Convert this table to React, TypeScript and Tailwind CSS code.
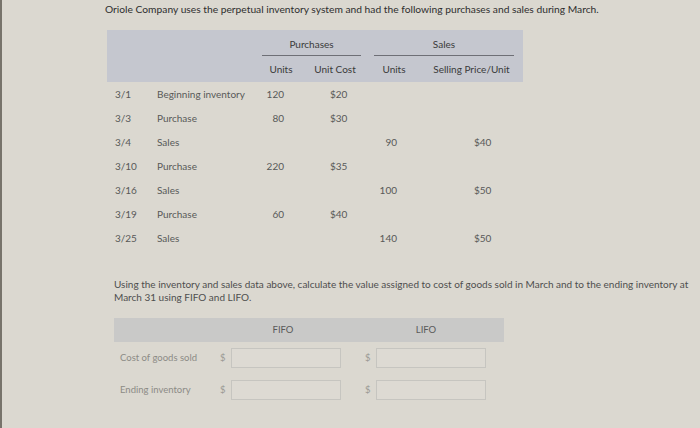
import React from 'react';

const rows = [
  { date: '3/1', desc: 'Beginning inventory', pu: '120', pc: '$20', su: '', sp: '' },
  { date: '3/3', desc: 'Purchase', pu: '80', pc: '$30', su: '', sp: '' },
  { date: '3/4', desc: 'Sales', pu: '', pc: '', su: '90', sp: '$40' },
  { date: '3/10', desc: 'Purchase', pu: '220', pc: '$35', su: '', sp: '' },
  { date: '3/16', desc: 'Sales', pu: '', pc: '', su: '100', sp: '$50' },
  { date: '3/19', desc: 'Purchase', pu: '60', pc: '$40', su: '', sp: '' },
  { date: '3/25', desc: 'Sales', pu: '', pc: '', su: '140', sp: '$50' },
];

const cols = 'grid grid-cols-[50px_105px_38px_70px_48px_105px]';
const answerCols = 'grid grid-cols-[106px_11px_110px_35px_110px_18px]';

export default function App() {
  return (
    <div className="w-[700px] h-[428px] bg-[#dbd8d0] border-l-2 border-[#77736b] overflow-hidden font-['Lato','Liberation_Sans',sans-serif]">
      <div className="pl-[103px] pt-[2px]">
        {/* Question text */}
        <p className="text-[10.25px] leading-[14px] text-[#2e2e2e] whitespace-nowrap">
          Oriole Company uses the perpetual inventory system and had the following purchases and sales during March.
        </p>

        {/* Inventory table */}
        <div className="mt-[14px] ml-[2px] w-[416px]">
          <div className="bg-[#c5c7cf] h-[52px] pt-[7px] text-[10px] text-[#3a3a3a]">
            <div className={cols}>
              <div className="col-span-2" />
              <div className="col-span-2 pr-[9px]">
                <div className="text-center leading-[14px]">Purchases</div>
                <div className="mt-[4px] h-px bg-[#6e6f76]" />
              </div>
              <div className="col-span-2 pl-[4px] pr-[9px]">
                <div className="text-center leading-[14px]">Sales</div>
                <div className="mt-[4px] h-px bg-[#6e6f76]" />
              </div>
            </div>
            <div className={`${cols} mt-[6px] leading-[14px]`}>
              <div className="col-span-2" />
              <div className="text-center">Units</div>
              <div className="text-center">Unit Cost</div>
              <div className="text-center">Units</div>
              <div className="text-center pl-[2px]">Selling Price/Unit</div>
            </div>
          </div>

          {rows.map((r) => (
            <div key={r.date} className={`${cols} h-[24px] items-center text-[10px] text-[#585858]`}>
              <div className="pl-[8px]">{r.date}</div>
              <div>{r.desc}</div>
              <div className="text-right pr-[16px]">{r.pu}</div>
              <div className="pl-[30px]">{r.pc}</div>
              <div className="text-right pr-[21px]">{r.su}</div>
              <div className="pl-[56px]">{r.sp}</div>
            </div>
          ))}
        </div>

        {/* Instructions */}
        <p className="mt-[28px] ml-[9px] text-[10px] leading-[13px] text-[#4e4e4e] whitespace-nowrap">
          Using the inventory and sales data above, calculate the value assigned to cost of goods sold in March and to the ending inventory at
          <br />
          March 31 using FIFO and LIFO.
        </p>

        {/* Answer table */}
        <div className="ml-[9px] mt-[14px] w-[390px]">
          <div className={`${answerCols} h-[24px] items-center bg-[#c9c9c8] text-[9.5px] text-[#5a5a5a]`}>
            <div className="col-span-2" />
            <div className="text-center pr-[6px]">FIFO</div>
            <div />
            <div className="text-center pr-[10px]">LIFO</div>
            <div />
          </div>

          {['Cost of goods sold', 'Ending inventory'].map((label, i) => (
            <div
              key={label}
              className={`${answerCols} items-center text-[9.5px] text-[#8c8b86] ${i === 0 ? 'mt-[6px]' : 'mt-[12px]'}`}
            >
              <div className="pl-[6px]">{label}</div>
              <div className="text-[#9a9994]">$</div>
              <div className="h-[20px] border border-[#c6c5c0] bg-[#dddad3]" />
              <div className="pl-[24px] text-[#9a9994]">$</div>
              <div className="h-[20px] border border-[#c6c5c0] bg-[#dddad3]" />
              <div />
            </div>
          ))}
        </div>
      </div>
    </div>
  );
}
